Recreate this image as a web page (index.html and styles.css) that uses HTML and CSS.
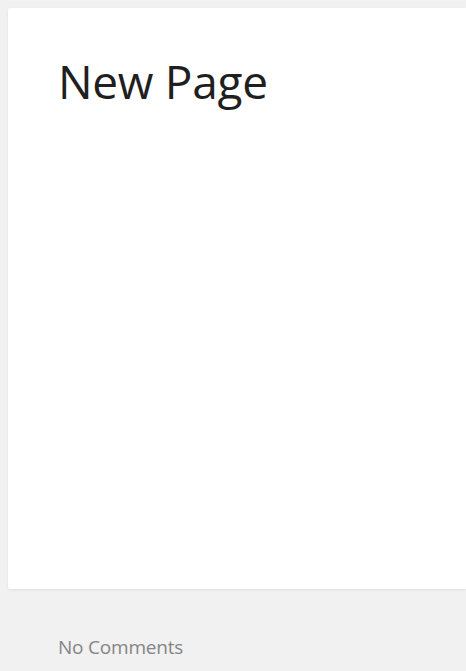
FILE: index.html
```html
<!DOCTYPE html>
<html lang="en">
<head>
<meta charset="utf-8">
<title>New Page</title>
<link rel="stylesheet" href="styles.css">
</head>
<body>
<main class="page">
  <article class="card">
    <h1 class="title">New Page</h1>
  </article>
  <footer class="comments">No Comments</footer>
</main>
</body>
</html>
```
FILE: styles.css
```css
html, body {
  margin: 0;
  padding: 0;
  overflow: hidden;
  background: #f1f1f1;
  font-family: "Open Sans", "Noto Sans", sans-serif;
}
.page {
  padding: 8px 0 0 8px;
}
.card {
  background: #fff;
  border-radius: 2px 0 0 2px;
  box-shadow: 0 1px 3px rgba(0,0,0,0.08);
  height: 581px;
  padding: 43px 50px 0 50px;
  box-sizing: border-box;
}
.title {
  margin: 0;
  font-size: 46px;
  font-weight: 400;
  line-height: 60px;
  letter-spacing: -0.3px;
  color: #1f1f1f;
}
.comments {
  padding: 45px 0 0 50px;
  font-size: 19px;
  line-height: 26px;
  letter-spacing: -0.2px;
  color: #858585;
}
```
